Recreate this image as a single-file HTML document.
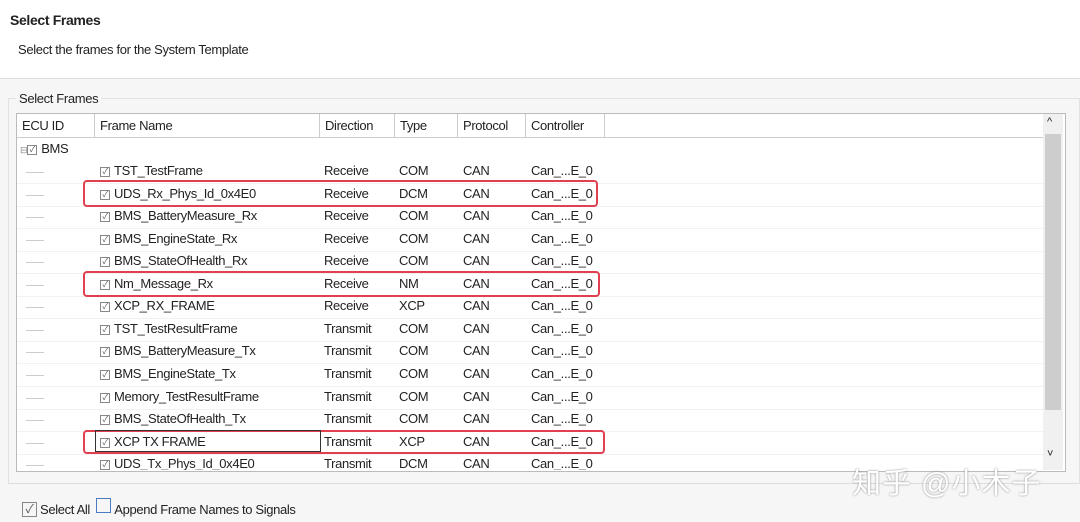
<!DOCTYPE html>
<html><head><style>
body{margin:0;width:1080px;height:521px;background:#fff;font-family:"Liberation Sans","Noto Sans CJK SC",sans-serif;font-size:13px;color:#222;position:relative;overflow:hidden;letter-spacing:-0.35px}
.a{position:absolute;white-space:nowrap}
.hd{position:absolute;top:114px;height:23px;border-right:1px solid #ccc;line-height:23px;padding-left:5px;box-sizing:border-box;background:#fff}
.dash{position:absolute;left:26px;width:18px;border-top:1px solid #ccc}
.rb{position:absolute;border:2px solid #e04050;border-radius:4px}
.cb{display:inline-block;width:8px;height:8px;border:1px solid #888;font-size:8px;line-height:8px;text-align:center;margin-right:4px;vertical-align:1px;color:#555}
</style></head><body>
<div class="a" style="left:10px;top:12px;font-weight:bold;font-size:14px">Select Frames</div>
<div class="a" style="left:18px;top:42px">Select the frames for the System Template</div>
<div class="a" style="left:0;top:78px;width:1080px;height:443px;background:#f6f6f6;border-top:1px solid #ddd"></div>
<div class="a" style="left:8px;top:98px;width:1070px;height:384px;border:1px solid #e2e2e2"></div>
<div class="a" style="left:16px;top:91px;background:#f6f6f6;padding:0 3px">Select Frames</div>
<div class="a" style="left:16px;top:113px;width:1048px;height:357px;background:#fff;border:1px solid #bbb;overflow:hidden"></div>
<div class="a" style="left:1043px;top:114px;width:20px;height:356px;background:#f0f0f0"></div>
<div class="a" style="left:1045px;top:134px;width:16px;height:276px;background:#cdcdcd"></div>
<div class="a" style="left:1047px;top:116px;font-size:11px">^</div>
<div class="a" style="left:1047px;top:448px;font-size:11px">˅</div>
<div class="hd" style="left:17px;width:78px">ECU ID</div>
<div class="hd" style="left:95px;width:225px">Frame Name</div>
<div class="hd" style="left:320px;width:75px">Direction</div>
<div class="hd" style="left:395px;width:63px">Type</div>
<div class="hd" style="left:458px;width:68px">Protocol</div>
<div class="hd" style="left:526px;width:79px">Controller</div>
<div class="a" style="left:17px;top:137px;width:1026px;border-top:1px solid #ccc"></div>
<div class="a" style="left:20px;top:141px"><span style="font-size:9px;color:#888">⊟</span><span class="cb">✓</span>BMS</div>
<div id="rows" class="a" style="left:0;top:0;width:1043px;height:470px;overflow:hidden"></div>
<script>
const R=[["TST_TestFrame","Receive","COM"],["UDS_Rx_Phys_Id_0x4E0","Receive","DCM"],["BMS_BatteryMeasure_Rx","Receive","COM"],["BMS_EngineState_Rx","Receive","COM"],["BMS_StateOfHealth_Rx","Receive","COM"],["Nm_Message_Rx","Receive","NM"],["XCP_RX_FRAME","Receive","XCP"],["TST_TestResultFrame","Transmit","COM"],["BMS_BatteryMeasure_Tx","Transmit","COM"],["BMS_EngineState_Tx","Transmit","COM"],["Memory_TestResultFrame","Transmit","COM"],["BMS_StateOfHealth_Tx","Transmit","COM"],["XCP TX FRAME","Transmit","XCP"],["UDS_Tx_Phys_Id_0x4E0","Transmit","DCM"]];
let h="";R.forEach((r,i)=>{const y=163+i*22.55;
h+=`<div class="dash" style="top:${y+9}px"></div><div class="a" style="left:17px;top:${y+20}px;width:1026px;border-top:1px solid #f2f2f2"></div>
<div class="a" style="left:100px;top:${y}px"><span class="cb">✓</span>${r[0]}</div><div class="a" style="left:324px;top:${y}px">${r[1]}</div><div class="a" style="left:399px;top:${y}px">${r[2]}</div><div class="a" style="left:463px;top:${y}px">CAN</div><div class="a" style="left:531px;top:${y}px">Can_...E_0</div>`;});
document.getElementById("rows").innerHTML=h;
</script>
<div class="rb" style="left:83px;top:180px;width:511px;height:23px"></div>
<div class="rb" style="left:83px;top:271px;width:513px;height:22px"></div>
<div class="rb" style="left:83px;top:430px;width:518px;height:20px"></div>
<div class="a" style="left:95px;top:430px;width:224px;height:20px;border:1px solid #333"></div>
<div class="a" style="left:8px;top:483px;width:1070px;border-top:1px solid #ddd"></div>
<div class="a" style="left:22px;top:498px"><span class="cb" style="width:13px;height:13px;font-size:12px;line-height:13px;margin-right:3px">✓</span>Select All <span class="cb" style="width:13px;height:13px;border-color:#4a7ac0;margin-left:3px;margin-right:3px"></span>Append Frame Names to Signals</div>
<div class="a" style="left:852px;top:460px;font-size:29px;color:#fff;letter-spacing:1px;text-shadow:0 0 2px #888">知乎 @小木子</div>
</body></html>
